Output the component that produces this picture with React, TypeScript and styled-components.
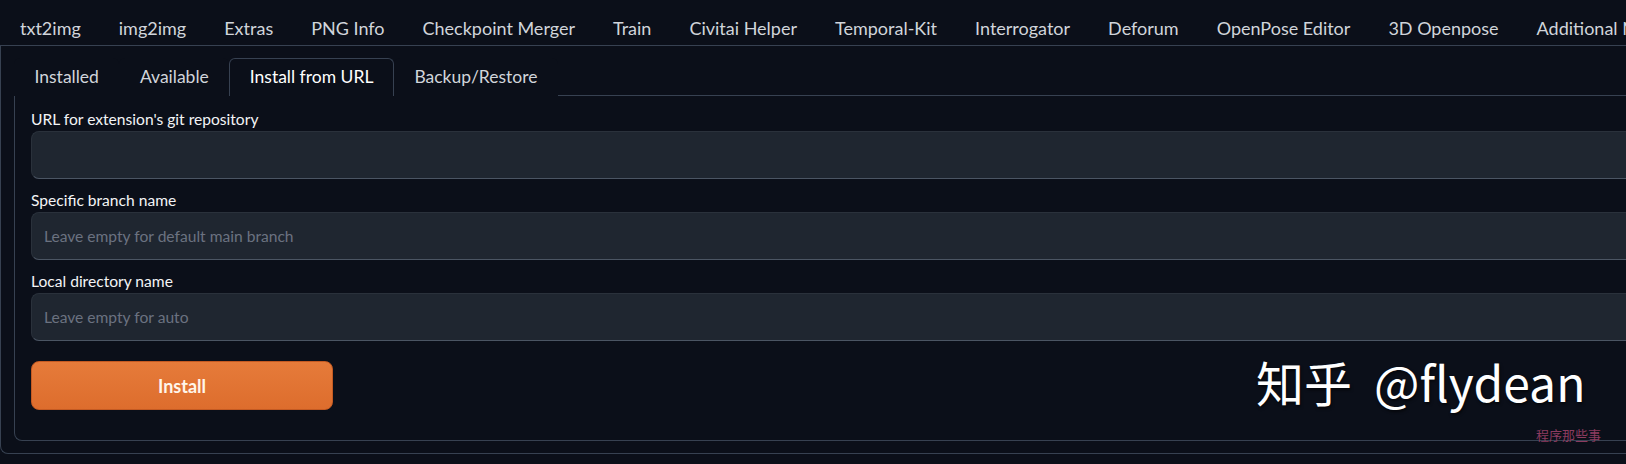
import React from "react";
import styled, { createGlobalStyle } from "styled-components";

const GlobalStyle = createGlobalStyle`
  html, body {
    margin: 0;
    padding: 0;
    background: #0b0f19;
    overflow: hidden;
  }
  body {
    font-family: Lato, "Noto Sans", sans-serif;
    color: #e5e7eb;
  }
  * { box-sizing: border-box; }
`;

const Screen = styled.div`
  position: relative;
  width: 1626px;
  height: 464px;
  background: #0b0f19;
`;

const TopBar = styled.nav`
  display: flex;
  height: 46px;
  padding: 11px 0 0 1px;
  border-bottom: 1px solid #374151;
  overflow: hidden;
`;

const TopTab = styled.div`
  padding: 0 19px;
  line-height: 34px;
  font-size: 18px;
  color: #d1d5db;
  white-space: nowrap;
`;

const Outer = styled.section`
  margin-right: -20px;
  padding: 12px 0 12px 13px;
  border-left: 1px solid #374151;
  border-bottom: 1px solid #374151;
  border-bottom-left-radius: 8px;
`;

const SubBar = styled.div`
  display: flex;
  height: 37px;
`;

const SubTab = styled.div<{ $active?: boolean }>`
  padding: 0 19.5px;
  line-height: 35px;
  font-size: 17.5px;
  white-space: nowrap;
  color: ${(p) => (p.$active ? "#ffffff" : "#d1d5db")};
  border: 1px solid ${(p) => (p.$active ? "#374151" : "transparent")};
  border-bottom: none;
  border-radius: 6px 6px 0 0;
  background: #0b0f19;
  position: relative;
  z-index: 1;
  margin-bottom: -1px;
  height: 38px;
`;

const Panel = styled.div`
  display: flex;
  flex-direction: column;
  gap: 11px;
  padding: 13px 0 30px 16px;
  border: 1px solid #374151;
  border-right: none;
  border-bottom-left-radius: 8px;
`;

const Field = styled.label`
  display: flex;
  flex-direction: column;
  gap: 2px;
`;

const Label = styled.span`
  font-size: 15.6px;
  line-height: 20px;
  color: #f3f4f6;
`;

const Input = styled.input`
  height: 48px;
  width: 100%;
  padding: 0 12px;
  font-family: Lato, "Noto Sans", sans-serif;
  font-size: 15.6px;
  color: #e5e7eb;
  background: #1f2630;
  border: 1px solid #2a313b;
  border-bottom-color: #4b5563;
  border-radius: 8px 0 0 8px;
  border-right: none;
  outline: none;
  &::placeholder {
    color: #6b7280;
  }
`;

const InstallButton = styled.button`
  margin-top: 9px;
  width: 302px;
  height: 49px;
  border: 1px solid #c45a22;
  border-radius: 8px;
  background: linear-gradient(180deg, #e67b3a 0%, #dd6d2d 100%);
  color: #fff6ea;
  font-family: Lato, "Noto Sans", sans-serif;
  font-size: 18px;
  font-weight: 700;
  cursor: pointer;
`;

const Watermark = styled.div`
  position: absolute;
  left: 1256px;
  top: 350px;
  display: flex;
  gap: 22px;
  font-family: "Noto Sans CJK SC", "Noto Sans", sans-serif;
  font-size: 48px;
  line-height: 62px;
  color: #ffffff;
  text-shadow: 1px 2px 3px rgba(0, 0, 0, 0.6);
  white-space: nowrap;
`;

const Signature = styled.div`
  position: absolute;
  left: 1536px;
  top: 426px;
  font-family: "Noto Sans CJK SC", serif;
  font-size: 13px;
  line-height: 18px;
  color: #8c3b60;
  white-space: nowrap;
`;

const topTabs = [
  "txt2img",
  "img2img",
  "Extras",
  "PNG Info",
  "Checkpoint Merger",
  "Train",
  "Civitai Helper",
  "Temporal-Kit",
  "Interrogator",
  "Deforum",
  "OpenPose Editor",
  "3D Openpose",
  "Additional Networks",
];

const subTabs = ["Installed", "Available", "Install from URL", "Backup/Restore"];

export default function App() {
  return (
    <>
      <GlobalStyle />
      <Screen>
        <TopBar>
          {topTabs.map((t) => (
            <TopTab key={t}>{t}</TopTab>
          ))}
        </TopBar>
        <Outer>
          <SubBar>
            {subTabs.map((t) => (
              <SubTab key={t} $active={t === "Install from URL"}>
                {t}
              </SubTab>
            ))}
          </SubBar>
          <Panel>
            <Field>
              <Label>URL for extension's git repository</Label>
              <Input />
            </Field>
            <Field>
              <Label>Specific branch name</Label>
              <Input placeholder="Leave empty for default main branch" />
            </Field>
            <Field>
              <Label>Local directory name</Label>
              <Input placeholder="Leave empty for auto" />
            </Field>
            <div>
              <InstallButton>Install</InstallButton>
            </div>
          </Panel>
        </Outer>
        <Watermark>
          <span>知乎</span>
          <span>@flydean</span>
        </Watermark>
        <Signature>程序那些事</Signature>
      </Screen>
    </>
  );
}
